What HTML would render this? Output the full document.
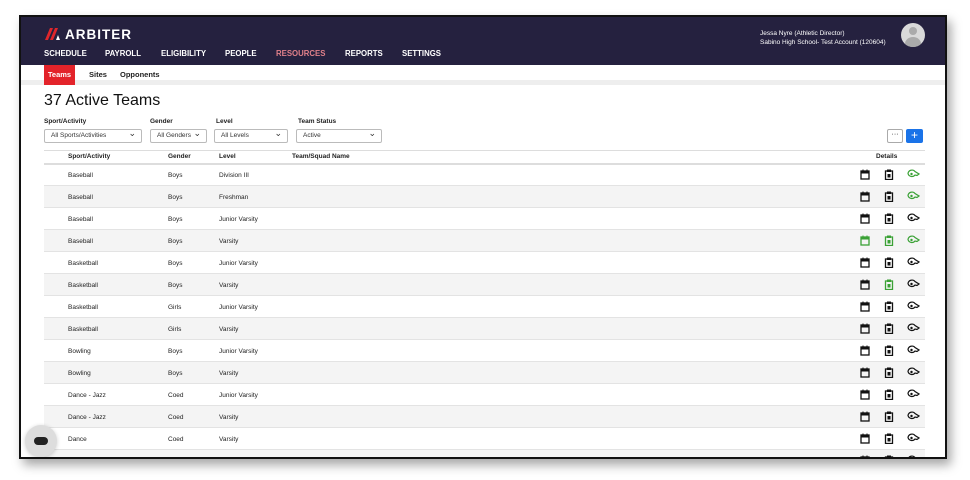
<!DOCTYPE html>
<html><head><style>
*{margin:0;padding:0;box-sizing:border-box}
body{width:970px;height:480px;background:#fff;font-family:"Liberation Sans",Arial,sans-serif;position:relative;overflow:hidden}
#win{position:absolute;left:19px;top:15px;width:928px;height:444px;border:2px solid #111;background:#fff;overflow:hidden;box-shadow:4px 6px 10px rgba(0,0,0,.35)}
#hdr{position:absolute;left:0;top:0;width:100%;height:48px;background:#25213f}
.logo{position:absolute;left:24px;top:10px;color:#fff;font-weight:bold;font-size:13.5px;letter-spacing:1px}
.nav{position:absolute;top:32px;color:#fff;font-weight:bold;font-size:7.8px}
.user{position:absolute;left:740px;top:12px;color:#fff;font-size:6.5px;line-height:9px}
.av{position:absolute;left:880px;top:6px;width:24px;height:24px;border-radius:50%;background:#d9d9d9;overflow:hidden}
#sub{position:absolute;top:48px;left:0;width:100%;height:20px;background:#fff;border-bottom:5px solid #eee}
.st{position:absolute;top:0;height:20px;line-height:20px;font-size:7.5px;font-weight:bold;color:#222}
h1{position:absolute;left:23px;top:75px;font-size:16px;font-weight:normal;color:#111}
.lbl{position:absolute;top:101px;font-size:6.5px;font-weight:bold;color:#222}
.sel{position:absolute;top:112px;height:14px;border:1px solid #bbb;border-radius:2px;font-size:6.5px;color:#333;padding-left:6px;line-height:12px}
.sel:after{content:"⌄";position:absolute;right:5px;top:-3px;font-size:9px}
.th{position:absolute;top:136px;font-size:6.5px;font-weight:bold;color:#222}
.row{position:absolute;left:23px;width:881px;height:22px;border-bottom:1px solid #e3e3e3}
.row.z{background:#f4f4f4}
.c{position:absolute;top:8px;font-size:6.5px;color:#222}
.ic{position:absolute;top:5px}
</style></head><body>
<div id="win">
<div id="hdr">
<svg style="position:absolute;left:24px;top:11px" width="16" height="12"><path d="M0 12L5 0h3L3 12zM5 12L10 0h3L8 12z" fill="#e0262b"/><path d="M11 12l2-5 2 5z" fill="#fff"/></svg>
<div class="logo" style="left:44px">ARBITER</div>
<div class="nav" style="left:23px">SCHEDULE</div>
<div class="nav" style="left:84px">PAYROLL</div>
<div class="nav" style="left:140px">ELIGIBILITY</div>
<div class="nav" style="left:204px">PEOPLE</div>
<div class="nav" style="left:255px;color:#e0808a">RESOURCES</div>
<div class="nav" style="left:324px">REPORTS</div>
<div class="nav" style="left:381px">SETTINGS</div>
<div class="user" style="left:739px">Jessa Nyre (Athletic Director)<br>Sabino High School- Test Account (120604)</div>
<div class="av"><div style="position:absolute;left:8px;top:4px;width:8px;height:8px;border-radius:50%;background:#aaa"></div><div style="position:absolute;left:4px;top:14px;width:16px;height:14px;border-radius:50%;background:#aaa"></div></div>
</div>
<div id="sub">
<div class="st" style="left:23px;width:31px;background:#e3232a;color:#fff;text-align:center">Teams</div>
<div class="st" style="left:68px">Sites</div>
<div class="st" style="left:99px">Opponents</div>
</div>
<h1>37 Active Teams</h1>
<div class="lbl" style="left:23px">Sport/Activity</div>
<div class="lbl" style="left:129px">Gender</div>
<div class="lbl" style="left:195px">Level</div>
<div class="lbl" style="left:277px">Team Status</div>
<div class="sel" style="left:23px;width:98px">All Sports/Activities</div>
<div class="sel" style="left:129px;width:57px">All Genders</div>
<div class="sel" style="left:193px;width:74px">All Levels</div>
<div class="sel" style="left:275px;width:86px">Active</div>
<div style="position:absolute;left:866px;top:112px;width:16px;height:14px;border:1px solid #aaa;border-radius:2px;font-size:7px;text-align:center;line-height:10px">···</div>
<div style="position:absolute;left:885px;top:112px;width:17px;height:14px;background:#1a73e8;border-radius:2px;color:#fff;font-size:12px;text-align:center;line-height:13px">+</div>
<div style="position:absolute;left:23px;top:133px;width:881px;height:15px;border-top:1px solid #ddd;border-bottom:2px solid #ddd"></div>
<div class="th" style="left:47px">Sport/Activity</div>
<div class="th" style="left:147px">Gender</div>
<div class="th" style="left:198px">Level</div>
<div class="th" style="left:271px">Team/Squad Name</div>
<div class="th" style="left:855px">Details</div>
<div id="rows"></div>
<div style="position:absolute;left:4px;top:408px;width:32px;height:32px;border-radius:50%;background:#ddd;box-shadow:0 1px 4px rgba(0,0,0,.2)"><div style="position:absolute;left:9px;top:12px;width:14px;height:8px;border-radius:4px;background:#222"></div></div>
</div>
<script>
var d=[["Baseball","Boys","Division III","kkg"],["Baseball","Boys","Freshman","kkg"],["Baseball","Boys","Junior Varsity","kkk"],["Baseball","Boys","Varsity","ggg"],["Basketball","Boys","Junior Varsity","kkk"],["Basketball","Boys","Varsity","kgk"],["Basketball","Girls","Junior Varsity","kkk"],["Basketball","Girls","Varsity","kkk"],["Bowling","Boys","Junior Varsity","kkk"],["Bowling","Boys","Varsity","kkk"],["Dance - Jazz","Coed","Junior Varsity","kkk"],["Dance - Jazz","Coed","Varsity","kkk"],["Dance","Coed","Varsity","kkk"],["","","","kkk"]];
var h="";
d.forEach(function(r,i){
var c=function(k){return k=="g"?"#3aa135":"#111"};
h+='<div class="row'+(i%2?' z':'')+'" style="top:'+(147+i*22)+'px">'+
'<div class="c" style="left:24px">'+r[0]+'</div><div class="c" style="left:124px">'+r[1]+'</div><div class="c" style="left:175px">'+r[2]+'</div>'+
'<svg class="ic" style="left:816px" width="10" height="11"><rect x="1" y="2" width="8" height="8" fill="none" stroke="'+c(r[3][0])+'" stroke-width="1.3"/><rect x="1" y="2" width="8" height="2.5" fill="'+c(r[3][0])+'"/><path d="M3 0.5v2M7 0.5v2" stroke="'+c(r[3][0])+'"/></svg>'+
'<svg class="ic" style="left:840px" width="10" height="11"><rect x="1.5" y="2" width="7" height="8.5" fill="none" stroke="'+c(r[3][1])+'" stroke-width="1.3"/><rect x="3" y="0.5" width="4" height="2.5" fill="'+c(r[3][1])+'"/><rect x="3.5" y="5" width="3" height="3.5" fill="'+c(r[3][1])+'"/></svg>'+
'<svg class="ic" style="left:863px" width="13" height="11"><path d="M1 4.5a4 4 0 0 1 7-2l4 2.5-2 1.5-2-0.5a4 4 0 0 1-7-1.5z" fill="none" stroke="'+c(r[3][2])+'" stroke-width="1.2"/><circle cx="4.5" cy="5" r="1.2" fill="'+c(r[3][2])+'"/></svg>'+
'</div>';});
document.getElementById("rows").outerHTML=h;
</script>
</body></html>
